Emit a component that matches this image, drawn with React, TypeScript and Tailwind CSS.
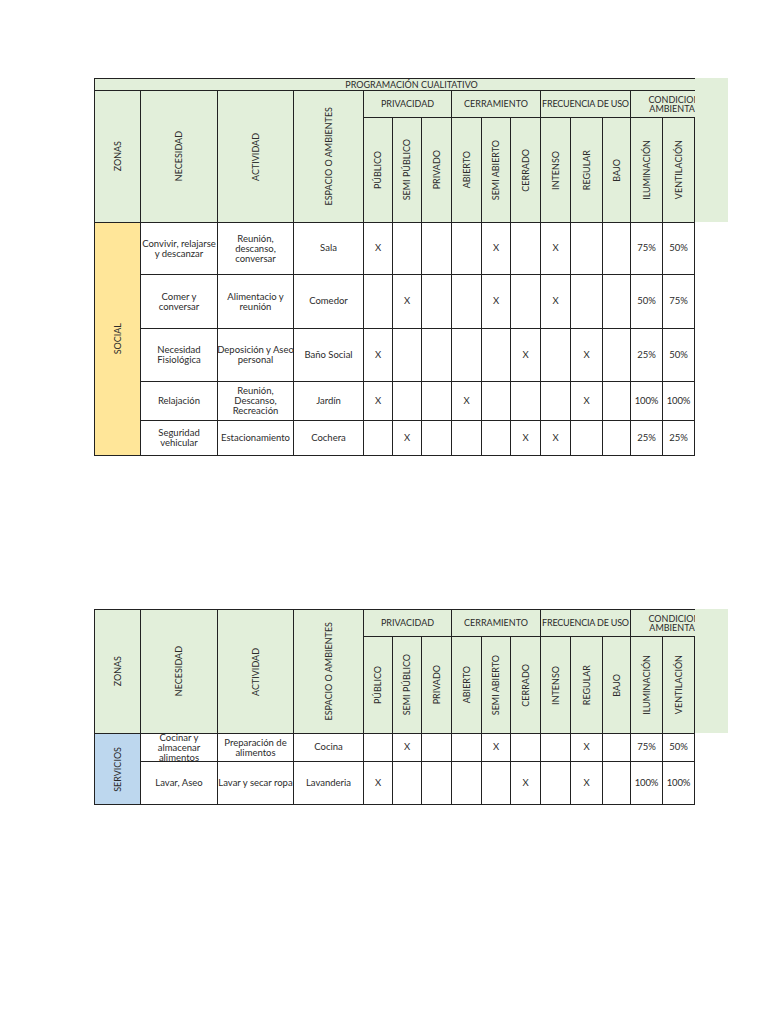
import type { ReactNode } from "react";

const HEAD = ["PÚBLICO", "SEMI PÚBLICO", "PRIVADO", "ABIERTO", "SEMI ABIERTO", "CERRADO", "INTENSO", "REGULAR", "BAJO", "ILUMINACIÓN", "VENTILACIÓN"];

type Row = { necesidad: string[]; actividad: string[]; espacio: string; marks: string[] };

// line breaks follow the sheet
const social: Row[] = [
  { necesidad: ["Convivir, relajarse", "y descanzar"], actividad: ["Reunión,", "descanso,", "conversar"], espacio: "Sala", marks: ["X", "", "", "", "X", "", "X", "", "", "75%", "50%"] },
  { necesidad: ["Comer y", "conversar"], actividad: ["Alimentacio y", "reunión"], espacio: "Comedor", marks: ["", "X", "", "", "X", "", "X", "", "", "50%", "75%"] },
  { necesidad: ["Necesidad", "Fisiológica"], actividad: ["Deposición y Aseo", "personal"], espacio: "Baño Social", marks: ["X", "", "", "", "", "X", "", "X", "", "25%", "50%"] },
  { necesidad: ["Relajación"], actividad: ["Reunión,", "Descanso,", "Recreación"], espacio: "Jardín", marks: ["X", "", "", "X", "", "", "", "X", "", "100%", "100%"] },
  { necesidad: ["Seguridad", "vehicular"], actividad: ["Estacionamiento"], espacio: "Cochera", marks: ["", "X", "", "", "", "X", "X", "", "", "25%", "25%"] },
];

const servicios: Row[] = [
  { necesidad: ["Cocinar y", "almacenar", "alimentos"], actividad: ["Preparación de", "alimentos"], espacio: "Cocina", marks: ["", "X", "", "", "X", "", "", "X", "", "75%", "50%"] },
  { necesidad: ["Lavar, Aseo"], actividad: ["Lavar y secar ropa"], espacio: "Lavanderia", marks: ["X", "", "", "", "", "X", "", "X", "", "100%", "100%"] },
];

function Cell({ children, className = "" }: { children?: ReactNode; className?: string }) {
  return (
    <div className={`border-r border-b border-[#222] flex items-center justify-center text-center overflow-hidden ${className}`}>
      {children}
    </div>
  );
}

function Vert({ children }: { children: ReactNode }) {
  return <span className="[writing-mode:vertical-rl] rotate-180 whitespace-nowrap">{children}</span>;
}

function Lines({ lines }: { lines: string[] }) {
  return (
    <div className="whitespace-nowrap">
      {lines.map((l) => (
        <div key={l}>{l}</div>
      ))}
    </div>
  );
}

function Header() {
  return (
    <>
      <Cell className="row-span-2 bg-[#e2efda]"><Vert>ZONAS</Vert></Cell>
      <Cell className="row-span-2 bg-[#e2efda]"><Vert>NECESIDAD</Vert></Cell>
      <Cell className="row-span-2 bg-[#e2efda]"><Vert>ACTIVIDAD</Vert></Cell>
      <Cell className="row-span-2 bg-[#e2efda]"><Vert>ESPACIO O AMBIENTES</Vert></Cell>
      <Cell className="col-span-3 bg-[#e2efda] whitespace-nowrap">PRIVACIDAD</Cell>
      <Cell className="col-span-3 bg-[#e2efda] whitespace-nowrap">CERRAMIENTO</Cell>
      <Cell className="col-span-3 bg-[#e2efda] whitespace-nowrap tracking-[-0.2px]">FRECUENCIA DE USO</Cell>
      <Cell className="col-span-2 bg-[#e2efda] border-r-0 !justify-start">
        <div className="w-[97px] shrink-0 text-center leading-[9px]">CONDICIONES<br />AMBIENTALES</div>
      </Cell>
      {HEAD.map((h) => (
        <Cell key={h} className="bg-[#e2efda]"><Vert>{h}</Vert></Cell>
      ))}
    </>
  );
}

function Body({ zone, zoneBg, rows }: { zone: string; zoneBg: string; rows: Row[] }) {
  return (
    <>
      <Cell className={zoneBg}><Vert>{zone}</Vert></Cell>
      {rows.map((r, i) => (
        <div key={i} className="contents">
          <Cell className="text-[9.5px] leading-[10px]"><Lines lines={r.necesidad} /></Cell>
          <Cell className="text-[9.5px] leading-[10px]"><Lines lines={r.actividad} /></Cell>
          <Cell className="text-[9.5px]">{r.espacio}</Cell>
          {r.marks.map((m, j) => (
            <Cell key={j} className="text-[9.5px] tracking-[-0.1px]">{m}</Cell>
          ))}
        </div>
      ))}
    </>
  );
}

const COLS = "grid-cols-[46px_77px_76px_70px_29px_29px_30px_30px_29px_30px_30px_32px_28px_32px_32px]";

export default function App() {
  return (
    <div className="min-h-screen bg-white pt-[78px] pl-[94px] text-[#2b2b2b] text-[9px] font-['Lato',sans-serif]">
      <div className="flex items-start">
        <div className={`grid ${COLS} grid-rows-[12px_27px_105px_52px_54px_53px_39px_35px] border-l border-t border-[#222] w-fit`}>
          <Cell className="col-span-15 bg-[#e2efda] border-r-0 pl-[33px] leading-none">PROGRAMACIÓN CUALITATIVO</Cell>
          <Header />
          <Body zone="SOCIAL" zoneBg="bg-[#ffe699] row-span-5" rows={social} />
        </div>
        <div className="w-[33px] h-[144px] bg-[#e2efda]" />
      </div>

      <div className="flex items-start mt-[153px]">
        <div className={`grid ${COLS} grid-rows-[27px_97px_28px_43px] border-l border-t border-[#222] w-fit`}>
          <Header />
          <Body zone="SERVICIOS" zoneBg="bg-[#bdd7ee] row-span-2" rows={servicios} />
        </div>
        <div className="w-[33px] h-[124px] bg-[#e2efda]" />
      </div>
    </div>
  );
}
